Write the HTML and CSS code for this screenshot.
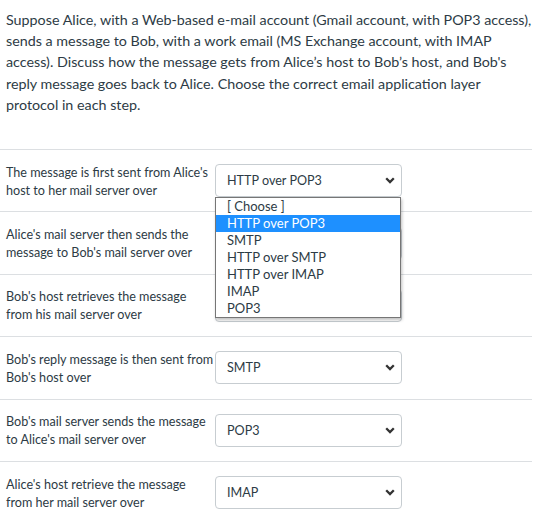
FILE: index.html
```html
<!DOCTYPE html>
<html>
<head>
<meta charset="utf-8">
<link rel="stylesheet" href="styles.css">
</head>
<body>
<div class="page">
  <p class="intro">Suppose Alice, with a Web-based e-mail account (Gmail account, with POP3 access), sends a message to Bob, with a work email (MS Exchange account, with IMAP access). Discuss how the message gets from Alice’s host to Bob’s host, and Bob's reply message goes back to Alice. Choose the correct email application layer protocol in each step.</p>
  <div class="rows">
    <div class="row">
      <div class="label">The message is first sent from Alice's host to her mail server over</div>
      <div class="select-wrap">
        <div class="select"><span>HTTP over POP3</span><svg class="chev" width="10" height="7" viewBox="0 0 10 7"><path d="M1.2 1.2 L5 5 L8.8 1.2" fill="none" stroke="#333" stroke-width="2.3"/></svg></div>
        <ul class="dropdown">
          <li>[ Choose ]</li>
          <li class="active">HTTP over POP3</li>
          <li>SMTP</li>
          <li>HTTP over SMTP</li>
          <li>HTTP over IMAP</li>
          <li>IMAP</li>
          <li>POP3</li>
        </ul>
      </div>
    </div>
    <div class="row">
      <div class="label">Alice's mail server then sends the message to Bob's mail server over</div>
      <div class="select-wrap">
        <div class="select"><span>SMTP</span><svg class="chev" width="10" height="7" viewBox="0 0 10 7"><path d="M1.2 1.2 L5 5 L8.8 1.2" fill="none" stroke="#333" stroke-width="2.3"/></svg></div>
      </div>
    </div>
    <div class="row">
      <div class="label">Bob's host retrieves the message from his mail server over</div>
      <div class="select-wrap">
        <div class="select"><span>IMAP</span><svg class="chev" width="10" height="7" viewBox="0 0 10 7"><path d="M1.2 1.2 L5 5 L8.8 1.2" fill="none" stroke="#333" stroke-width="2.3"/></svg></div>
      </div>
    </div>
    <div class="row">
      <div class="label">Bob's reply message is then sent from Bob's host over</div>
      <div class="select-wrap">
        <div class="select"><span>SMTP</span><svg class="chev" width="10" height="7" viewBox="0 0 10 7"><path d="M1.2 1.2 L5 5 L8.8 1.2" fill="none" stroke="#333" stroke-width="2.3"/></svg></div>
      </div>
    </div>
    <div class="row">
      <div class="label">Bob's mail server sends the message to Alice's mail server over</div>
      <div class="select-wrap">
        <div class="select"><span>POP3</span><svg class="chev" width="10" height="7" viewBox="0 0 10 7"><path d="M1.2 1.2 L5 5 L8.8 1.2" fill="none" stroke="#333" stroke-width="2.3"/></svg></div>
      </div>
    </div>
    <div class="row">
      <div class="label">Alice's host retrieve the message from her mail server over</div>
      <div class="select-wrap">
        <div class="select"><span>IMAP</span><svg class="chev" width="10" height="7" viewBox="0 0 10 7"><path d="M1.2 1.2 L5 5 L8.8 1.2" fill="none" stroke="#333" stroke-width="2.3"/></svg></div>
      </div>
    </div>
  </div>
</div>
</body>
</html>
```
FILE: styles.css
```css
html, body {
  margin: 0;
  padding: 0;
  background: #ffffff;
}
body {
  font-family: Lato, "Liberation Sans", sans-serif;
  color: #2d3b45;
}
.page {
  width: 532px;
  padding-top: 9px;
}
.intro {
  margin: 0 0 34px 0;
  padding: 0 0 0 6px;
  font-size: 14.3px;
  line-height: 21.2px;
}
.row {
  display: flex;
  align-items: center;
  border-top: 1px solid #dcdfe2;
  padding: 11.7px 0;
}
.label {
  flex: 0 0 209px;
  padding: 2px 0 0 6px;
  font-size: 12.6px;
  line-height: 18px;
}
.select-wrap {
  position: relative;
}
.select {
  box-sizing: border-box;
  width: 187px;
  height: 33px;
  border: 1px solid #c7cdd1;
  border-radius: 4px;
  padding: 0 6px 0 11px;
  display: flex;
  align-items: center;
  justify-content: space-between;
  font-size: 12.6px;
  background: #fff;
}
.dropdown {
  position: absolute;
  left: 0;
  top: 33px;
  width: 186px;
  box-sizing: border-box;
  margin: 0;
  padding: 0;
  list-style: none;
  background: #fff;
  border: 1px solid #767676;
  box-shadow: 1px 2px 3px rgba(0,0,0,0.25);
  font-size: 13px;
  z-index: 5;
}
.dropdown li {
  height: 17px;
  line-height: 17px;
  padding-left: 11px;
}
.dropdown li.active {
  background: #1e90ff;
  color: #fff;
}
```
